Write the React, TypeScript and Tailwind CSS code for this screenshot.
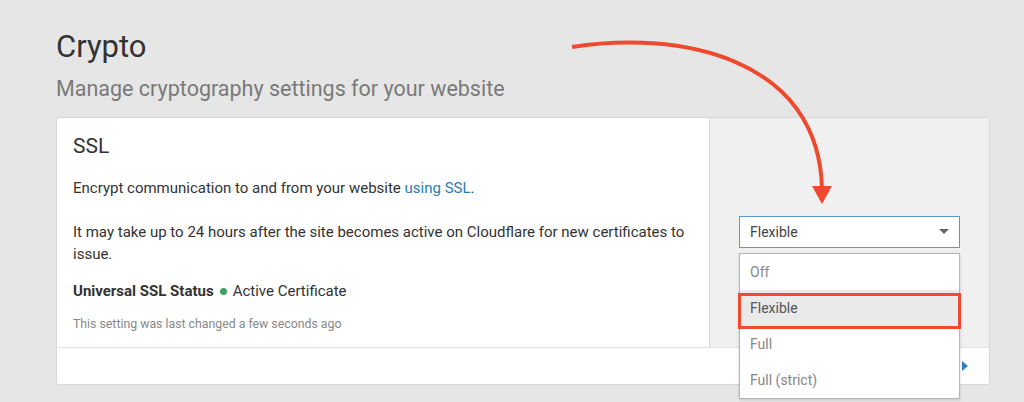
import { useState } from 'react'

const SSL_MODES = ['Off', 'Flexible', 'Full', 'Full (strict)']

function CurvedArrow() {
  return (
    <svg
      className="pointer-events-none absolute left-0 top-0"
      width={1024}
      height={402}
      viewBox="0 0 1024 402"
      fill="none"
    >
      <path
        d="M572 47 C680 30 820 58 822 190"
        stroke="#ee4a2d"
        strokeWidth={4}
        strokeLinecap="butt"
      />
      <polygon points="812,186 832,186 822,204" fill="#ee4a2d" />
    </svg>
  )
}

function ModeSelect({ value }: { value: string }) {
  return (
    <div className="relative">
      <div className="flex h-[32px] items-center justify-between border border-[#5a97cc] bg-white pl-[10px] pr-[10px] text-[14px] text-[#444]">
        <span>{value}</span>
        <svg width="10" height="6" viewBox="0 0 10 6">
          <polygon points="0,0 10,0 5,5" fill="#666" />
        </svg>
      </div>

      {/* open menu */}
      <div className="absolute left-0 top-[37px] z-10 w-full border border-[#b5b5b5] bg-white shadow-[0_1px_3px_rgba(0,0,0,0.15)]">
        {SSL_MODES.map((mode) => (
          <div
            key={mode}
            className={
              mode === value
                ? 'flex h-[36px] items-center bg-[#e9eae9] pl-[10px] text-[14px] text-[#555]'
                : 'flex h-[36px] items-center pl-[10px] text-[14px] text-[#888]'
            }
          >
            {mode}
          </div>
        ))}
        {/* highlight box around the chosen option */}
        <div className="absolute left-[-2px] top-[39px] h-[36px] w-[223px] border-[3px] border-[#ee4a2d]" />
      </div>
    </div>
  )
}

export default function App() {
  const [mode] = useState('Flexible')

  return (
    <div
      className="relative h-[402px] w-[1024px] overflow-hidden bg-[#e6e6e6] pl-[56px] pr-[34px] pt-[30px]"
      style={{ fontFamily: 'Roboto, "Liberation Sans", sans-serif' }}
    >
      <h1 className="text-[31px] leading-[34px] text-[#333]">Crypto</h1>
      <p className="mt-[11px] text-[21.5px] leading-[28px] text-[#7a7a7a]">
        Manage cryptography settings for your website
      </p>

      <section className="mt-[14px] rounded-[3px] border border-[#d8d8d8] bg-white">
        <div className="flex">
          <div className="flex-1 px-[16px] pt-[14px] text-[15px] text-[#333]">
            <h2 className="text-[21px] leading-[28px] text-[#333]">SSL</h2>
            <p className="mt-[17px] leading-[22px]">
              Encrypt communication to and from your website{' '}
              <span className="text-[#2c7cb4]">using SSL</span>.
            </p>
            <p className="mt-[22px] leading-[22px]">
              It may take up to 24 hours after the site becomes active on Cloudflare for new certificates to
              issue.
            </p>
            <div className="mt-[15px] flex items-center leading-[22px]">
              <span className="font-bold">Universal SSL Status</span>
              <span className="mx-[6px] h-[7px] w-[7px] rounded-full bg-[#3ba35f]" />
              <span>Active Certificate</span>
            </div>
            <p className="mt-[14px] pb-[15px] text-[12.3px] leading-[16px] text-[#888]">
              This setting was last changed a few seconds ago
            </p>
          </div>
          <div className="w-[280px] border-l border-[#dcdcdc] bg-[#f0f0f0] px-[29px] pt-[98px]">
            <ModeSelect value={mode} />
          </div>
        </div>
        <div className="flex h-[37px] items-center justify-end border-t border-[#e2e2e2] pr-[21px]">
          <svg width="6" height="10" viewBox="0 0 6 10">
            <polygon points="0,0 6,5 0,10" fill="#2f7fc1" />
          </svg>
        </div>
      </section>

      <CurvedArrow />
    </div>
  )
}
